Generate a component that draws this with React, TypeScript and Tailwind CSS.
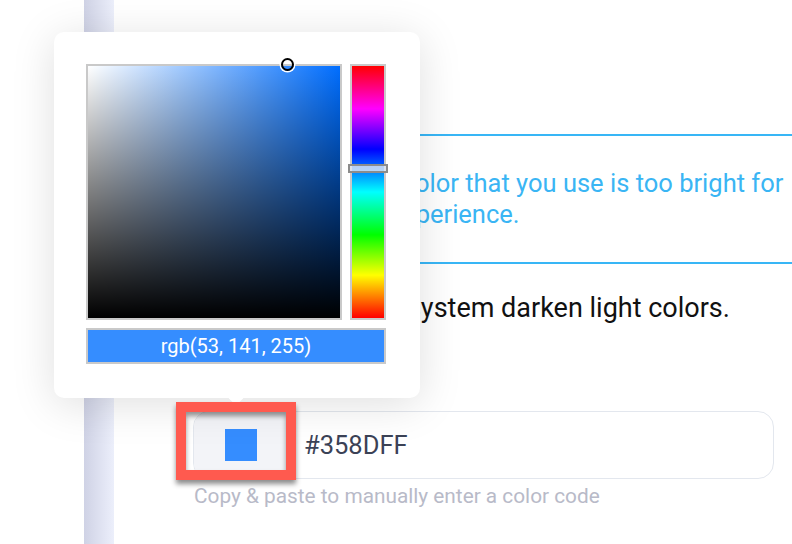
const FONT = { fontFamily: 'Roboto, "Noto Sans", sans-serif' };

function SaturationField() {
  return (
    <div className="relative h-[256px] w-[256px] border-2 border-[#c9c9c9] bg-[#006eff]">
      <div className="absolute inset-0 bg-[linear-gradient(to_right,#ffffff,rgba(255,255,255,0))]" />
      <div className="absolute inset-0 bg-[linear-gradient(to_top,#000000,rgba(0,0,0,0))]" />
      {/* picker handle */}
      <div className="absolute left-[193px] top-[-8px] h-[13px] w-[13px] rounded-full border-2 border-black shadow-[0_0_0_1.5px_#ffffff]" />
    </div>
  );
}

function HueBar() {
  return (
    <div className="relative h-[256px] w-[36px] border-2 border-[#c9c9c9] bg-[linear-gradient(to_bottom,#ff0000_0%,#ff00ff_17%,#0000ff_33%,#00ffff_50%,#00ff00_67%,#ffff00_83%,#ff0000_100%)]">
      <div className="absolute left-[-4px] top-[98px] h-[9px] w-[40px] border-2 border-[#8c8c8c] bg-[#e4eaf4]/80" />
    </div>
  );
}

function ColorPopover() {
  return (
    <div className="absolute left-[54px] top-[32px] w-[366px] rounded-[10px] bg-white px-[32px] pb-[34px] pt-[32px] shadow-[0_6px_44px_rgba(0,0,0,0.13)]">
      <div className="flex gap-[8px]">
        <SaturationField />
        <HueBar />
      </div>
      <div className="mt-[8px] flex h-[36px] w-[300px] items-center justify-center border-2 border-[#c9c9c9] bg-[#358dff] text-[20px] text-white">
        rgb(53, 141, 255)
      </div>
      {/* little arrow pointing to the swatch */}
      <div className="absolute bottom-[-5px] left-[176px] h-[12px] w-[12px] rotate-45 rounded-[2px] bg-white" />
    </div>
  );
}

export default function App() {
  return (
    <div className="relative flex h-[544px] w-[792px] overflow-hidden bg-white" style={FONT}>
      <div className="w-[84px] shrink-0" />
      <div className="w-[30px] shrink-0 bg-[linear-gradient(to_right,#cfd2e5,#eceffb)]" />

      <main className="flex-1 pl-[79px] pt-[134px]">
        <div className="-mr-[20px] flex h-[130px] items-center border-y-2 border-[#38b6f6]">
          <p className="whitespace-nowrap pl-[46px] text-[25.5px] leading-[31px] text-[#3ab5f4]">
            Heads up: the color that you use is too bright for
            <br />an ideal user experience.
          </p>
        </div>

        <label className="mt-[28px] flex items-center gap-[16px] whitespace-nowrap text-[27px] leading-[32px] text-[#111111]">
          <span className="h-[22px] w-[22px] shrink-0 rounded border-2 border-[#c4c7d4]" />
          Let the design system darken light colors.
        </label>

        <div className="mt-[87px] flex h-[68px] w-[581px] overflow-hidden rounded-[16px] border-[1.5px] border-[#e3e7ee]">
          <div className="flex w-[94px] items-center justify-center border-r border-[#e3e7ee] bg-[#f3f4f8]">
            <div className="h-[32px] w-[32px] bg-[#358dff]" />
          </div>
          <div className="flex items-center pl-[16px] text-[25.5px] text-[#3b4256]">#358DFF</div>
        </div>
        <p className="mt-[5px] pl-[1px] text-[20.8px] leading-[24px] text-[#b8bac8]">
          Copy &amp; paste to manually enter a color code
        </p>
      </main>

      <ColorPopover />

      {/* annotation highlight around the swatch */}
      <div className="absolute left-[176px] top-[402px] h-[78px] w-[120px] border-[10px] border-[#ff5a4f] shadow-[0_4px_5px_rgba(0,0,0,0.45),inset_0_4px_5px_rgba(0,0,0,0.4)]" />
    </div>
  );
}
